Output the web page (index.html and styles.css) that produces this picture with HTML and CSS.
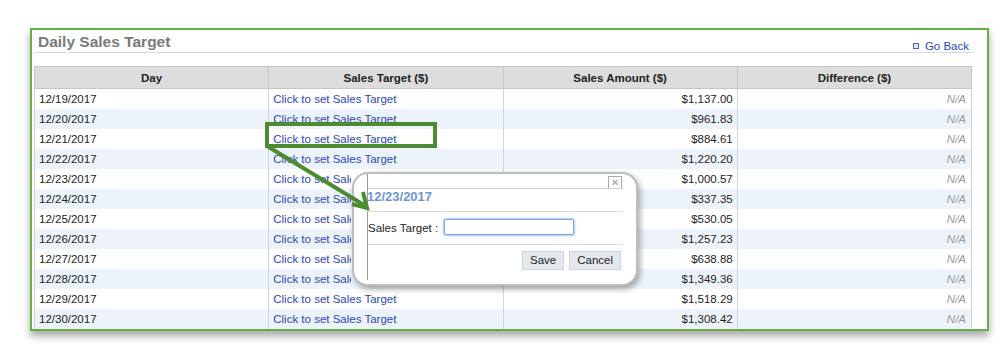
FILE: index.html
```html
<!DOCTYPE html>
<html>
<head>
<meta charset="utf-8">
<link rel="stylesheet" href="styles.css">
</head>
<body>
<div class="frame">
  <div class="head">
    <div class="title">Daily Sales Target</div>
    <a class="goback"><span class="sq"></span>Go Back</a>
  </div>
  <table class="grid">
    <thead>
      <tr><th>Day</th><th>Sales Target ($)</th><th>Sales Amount ($)</th><th>Difference ($)</th></tr>
    </thead>
    <tbody>
      <tr><td>12/19/2017</td><td><a class="lnk">Click to set Sales Target</a></td><td class="num">$1,137.00</td><td class="na">N/A</td></tr>
      <tr><td>12/20/2017</td><td><a class="lnk">Click to set Sales Target</a></td><td class="num">$961.83</td><td class="na">N/A</td></tr>
      <tr><td>12/21/2017</td><td><a class="lnk">Click to set Sales Target</a></td><td class="num">$884.61</td><td class="na">N/A</td></tr>
      <tr><td>12/22/2017</td><td><a class="lnk">Click to set Sales Target</a></td><td class="num">$1,220.20</td><td class="na">N/A</td></tr>
      <tr><td>12/23/2017</td><td class="hid"><a class="lnk">Click to set Sales Target</a></td><td class="num">$1,000.57</td><td class="na">N/A</td></tr>
      <tr><td>12/24/2017</td><td class="hid"><a class="lnk">Click to set Sales Target</a></td><td class="num">$337.35</td><td class="na">N/A</td></tr>
      <tr><td>12/25/2017</td><td class="hid"><a class="lnk">Click to set Sales Target</a></td><td class="num">$530.05</td><td class="na">N/A</td></tr>
      <tr><td>12/26/2017</td><td class="hid"><a class="lnk">Click to set Sales Target</a></td><td class="num">$1,257.23</td><td class="na">N/A</td></tr>
      <tr><td>12/27/2017</td><td class="hid"><a class="lnk">Click to set Sales Target</a></td><td class="num">$638.88</td><td class="na">N/A</td></tr>
      <tr><td>12/28/2017</td><td class="hid"><a class="lnk">Click to set Sales Target</a></td><td class="num">$1,349.36</td><td class="na">N/A</td></tr>
      <tr><td>12/29/2017</td><td><a class="lnk">Click to set Sales Target</a></td><td class="num">$1,518.29</td><td class="na">N/A</td></tr>
      <tr><td>12/30/2017</td><td><a class="lnk">Click to set Sales Target</a></td><td class="num">$1,308.42</td><td class="na">N/A</td></tr>
    </tbody>
  </table>
</div>

<div class="popup">
  <div class="panel">
    <div class="closerow"><span class="close">&#x2715;</span></div>
    <div class="ptitle">12/23/2017</div>
    <div class="prow">
      <label class="plabel">Sales Target :</label>
      <span class="pinput"></span>
    </div>
    <div class="pbtns">
      <span class="btn">Save</span>
      <span class="btn">Cancel</span>
    </div>
  </div>
</div>

<svg class="overlay" width="1000" height="351" viewBox="0 0 1000 351">
  <rect x="267" y="124" width="168" height="22" fill="none" stroke="#4c8b30" stroke-width="4"/>
  <line x1="267" y1="146" x2="364" y2="205" stroke="#4c8b30" stroke-width="4"/>
  <polyline points="352,204 367,208 363,192" fill="none" stroke="#4c8b30" stroke-width="4" stroke-linejoin="miter" stroke-linecap="butt"/>
</svg>
</body>
</html>
```

FILE: styles.css
```css
html, body {
  margin: 0;
  padding: 0;
  background: #ffffff;
}
body {
  width: 1000px;
  height: 351px;
  overflow: hidden;
  position: relative;
  font-family: "Liberation Sans", Arial, sans-serif;
  font-size: 11.5px;
  color: #222;
}
.frame {
  margin: 28px 0 0 30px;
  border: 2px solid #64b047;
  padding: 0 13px 0 2px;
  box-sizing: content-box;
  width: 940px;
  box-shadow: 0 5px 8px rgba(0, 0, 0, 0.35);
  background: #fff;
}
.head {
  display: flex;
  justify-content: space-between;
  align-items: flex-end;
  height: 22px;
  border-bottom: 1px solid #dcdcdc;
  margin-bottom: 13px;
}
.title {
  font-size: 15.5px;
  font-weight: bold;
  color: #7a7a7a;
  padding-left: 4px;
  padding-bottom: 1px;
}
.goback {
  color: #2a47b8;
  font-size: 11.5px;
  display: flex;
  align-items: center;
  padding-bottom: 0px;
  padding-right: 5px;
}
.sq {
  width: 4px;
  height: 4px;
  border: 1px solid #5068a8;
  background: #dfe6f5;
  margin-right: 6px;
}
.grid {
  width: 938px;
  border-collapse: collapse;
  table-layout: fixed;
}
.grid th {
  height: 21px;
  background: #dddddd;
  border: 1px solid #c6c6c6;
  font-weight: bold;
  font-size: 11.5px;
  color: #222;
  padding: 0;
}
.grid td {
  height: 20px;
  padding: 0 4px;
  border-left: 1px solid #d2d2d2;
  border-right: 1px solid #d2d2d2;
  white-space: nowrap;
  overflow: hidden;
}
.grid tbody tr:nth-child(even) td {
  background: #edf3fb;
}
.lnk {
  color: #2a47b8;
}
.hid .lnk {
  display: inline-block;
  width: 78px;
  overflow: hidden;
  vertical-align: top;
}
.num {
  text-align: right;
}
.na {
  text-align: right;
  font-style: italic;
  color: #9a9a9a;
}
.grid td:last-child {
  padding-right: 5px;
}

.popup {
  position: absolute;
  left: 352px;
  top: 172px;
  width: 282px;
  height: 110px;
  border: 2px solid #bdbdbd;
  border-radius: 16px;
  background: #fff;
  box-shadow: 2px 3px 6px rgba(0, 0, 0, 0.35);
}
.panel {
  margin-left: 13px;
  width: 255px;
  height: 106px;
  border-left: 1px solid #9a9a9a;
  display: flex;
  flex-direction: column;
}
.closerow {
  height: 14px;
  display: flex;
  justify-content: flex-end;
  align-items: flex-end;
  padding-right: 1px;
  border-bottom: 1px solid #cfcfcf;
}
.close {
  width: 12px;
  height: 11px;
  border: 1px solid #aaa;
  border-bottom: none;
  font-size: 10px;
  line-height: 11px;
  text-align: center;
  color: #999;
}
.ptitle {
  height: 22px;
  line-height: 15px;
  font-size: 13px;
  font-weight: bold;
  color: #6f93d8;
  border-bottom: 1px solid #dcdcdc;
  margin-left: -1px;
}
.prow {
  height: 32px;
  display: flex;
  align-items: center;
  border-bottom: 1px solid #dcdcdc;
}
.plabel {
  font-size: 11.5px;
  color: #222;
  margin-right: 6px;
}
.pinput {
  width: 128px;
  height: 14px;
  border: 1px solid #79a6e8;
  box-shadow: 0 0 2px 1px #a9c8f2;
  border-radius: 2px;
  margin-top: -2px;
}
.pbtns {
  display: flex;
  justify-content: flex-end;
  gap: 5px;
  padding-top: 6px;
  padding-right: 2px;
}
.btn {
  height: 17px;
  line-height: 17px;
  padding: 0 7px;
  background: #e3e8ef;
  border: 1px solid #cfd3d9;
  font-size: 11.5px;
  color: #222;
}
.overlay {
  position: absolute;
  left: 0;
  top: 0;
  pointer-events: none;
}
```
